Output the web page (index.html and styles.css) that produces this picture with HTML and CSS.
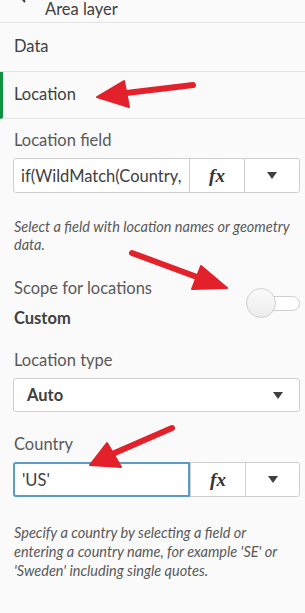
FILE: index.html
```html
<!DOCTYPE html>
<html>
<head>
<meta charset="utf-8">
<link rel="stylesheet" href="styles.css">
</head>
<body>
<div class="panel">
  <div class="header">
    <svg class="back" width="10" height="14" viewBox="0 0 10 14"><path d="M7 1 L2 7 L7 13" fill="none" stroke="#404040" stroke-width="2"/></svg>
    <span class="title">Area layer</span>
  </div>
  <div class="tab tab-data">Data</div>
  <div class="tab tab-active">Location</div>
  <div class="content">
    <div class="label first">Location field</div>
    <div class="field">
      <div class="field-input">if(WildMatch(Country,</div>
      <div class="field-btn fx">fx</div>
      <div class="field-btn dd"><span class="caret"></span></div>
    </div>
    <div class="help">Select a field with location names or geometry data.</div>
    <div class="scope">
      <div class="scope-text">
        <div class="label">Scope for locations</div>
        <div class="value">Custom</div>
      </div>
      <div class="switch"><span class="track"></span><span class="knob"></span></div>
    </div>
    <div class="label gap">Location type</div>
    <div class="select">
      <span class="value">Auto</span>
      <span class="caret"></span>
    </div>
    <div class="label gap">Country</div>
    <div class="field">
      <div class="field-input focused">'US'</div>
      <div class="field-btn fx">fx</div>
      <div class="field-btn dd"><span class="caret"></span></div>
    </div>
    <div class="help help2">Specify a country by selecting a field or entering a country name, for example 'SE' or 'Sweden' including single quotes.</div>
  </div>
  <svg class="arrows" width="305" height="613" viewBox="0 0 305 613">
    <g fill="#e3212b" stroke="#e3212b" stroke-linecap="round" stroke-linejoin="round">
      <line x1="193" y1="85" x2="118" y2="94" stroke-width="6"/>
      <polygon points="97,97 124,81 129,107" stroke-width="2"/>
      <line x1="132" y1="253" x2="205" y2="280" stroke-width="6"/>
      <polygon points="227,288 201,266 192,289" stroke-width="2"/>
      <line x1="172" y1="428" x2="110" y2="455" stroke-width="6"/>
      <polygon points="90,465 107,443 121,467" stroke-width="2"/>
    </g>
  </svg>
</div>
</body>
</html>
```

FILE: styles.css
```css
* { box-sizing: border-box; }
html, body { margin: 0; padding: 0; }
body {
  background: #fafafa;
  font-family: "Lato", "Open Sans", sans-serif;
  color: #595959;
}
.panel {
  position: relative;
  width: 305px;
  height: 613px;
  overflow: hidden;
  background: #fafafa;
}
.header {
  position: relative;
  height: 23px;
  border-bottom: 1px solid #e3e3e3;
  padding-left: 45px;
}
.back {
  position: absolute;
  left: 18px;
  top: -11px;
}
.title {
  display: block;
  font-size: 16.5px;
  line-height: 18px;
  color: #404040;
}
.tab {
  display: flex;
  align-items: center;
  padding-left: 14px;
  padding-bottom: 3px;
  font-size: 16.5px;
  color: #404040;
  border-bottom: 1px solid #e3e3e3;
}
.tab-data { height: 49px; }
.tab-active {
  height: 47px;
  border-left: 3px solid #119142;
  padding-left: 11px;
}
.content {
  padding: 0 5px 0 13px;
}
.label {
  font-size: 16.5px;
  line-height: 20px;
  color: #595959;
  padding-left: 1px;
}
.label.first { margin-top: 11px; }
.label.gap { margin-top: 22px; }
.field {
  display: flex;
  height: 35px;
  margin-top: 8px;
  background: #fff;
  border: 1px solid #cfcfcf;
  border-radius: 3px;
}
.field-input {
  flex: 0 0 175px;
  display: flex;
  align-items: center;
  padding-left: 7px;
  font-size: 16.5px;
  color: #404040;
  white-space: nowrap;
  overflow: hidden;
}
.field-input.focused {
  margin: -1px 0 -1px -1px;
  flex-basis: 177px;
  border: 2px solid #5b9bc6;
  border-radius: 3px 0 0 3px;
  padding-left: 7px;
}
.field-btn {
  display: flex;
  align-items: center;
  justify-content: center;
  border-left: 1px solid #cfcfcf;
}
.fx {
  flex: 0 0 55px;
  font-family: "Liberation Serif", "DejaVu Serif", serif;
  font-style: italic;
  font-weight: bold;
  font-size: 19px;
  color: #333;
}
.dd { flex: 1; }
.caret {
  width: 0;
  height: 0;
  border-left: 5.5px solid transparent;
  border-right: 5.5px solid transparent;
  border-top: 7px solid #404040;
}
.help {
  margin-top: 25px;
  font-size: 14.5px;
  line-height: 18px;
  font-style: italic;
  color: #595959;
  padding-left: 1px;
}
.help2 {
  margin-top: 26px;
  line-height: 19px;
  max-width: 276px;
}
.scope {
  display: flex;
  align-items: center;
  justify-content: space-between;
  margin-top: 24px;
}
.value {
  margin-top: 10px;
  font-size: 16.5px;
  line-height: 20px;
  font-weight: bold;
  color: #404040;
  padding-left: 1px;
}
.switch {
  position: relative;
  width: 54px;
  height: 30px;
}
.track {
  position: absolute;
  left: 14px;
  right: 0;
  top: 8px;
  height: 15px;
  border: 1px solid #cfcfcf;
  border-radius: 8px;
  background: #fff;
}
.knob {
  position: absolute;
  left: 0;
  top: 0;
  width: 30px;
  height: 30px;
  border-radius: 50%;
  border: 1px solid #cfcfcf;
  background: linear-gradient(#fafafa, #ececec);
}
.select {
  display: flex;
  align-items: center;
  justify-content: space-between;
  height: 34px;
  margin-top: 8px;
  background: #fff;
  border: 1px solid #cfcfcf;
  border-radius: 3px;
  padding: 0 16px 0 13px;
}
.select .value { margin-top: 0; padding-left: 0; }
.arrows {
  position: absolute;
  left: 0;
  top: 0;
  pointer-events: none;
}
```
